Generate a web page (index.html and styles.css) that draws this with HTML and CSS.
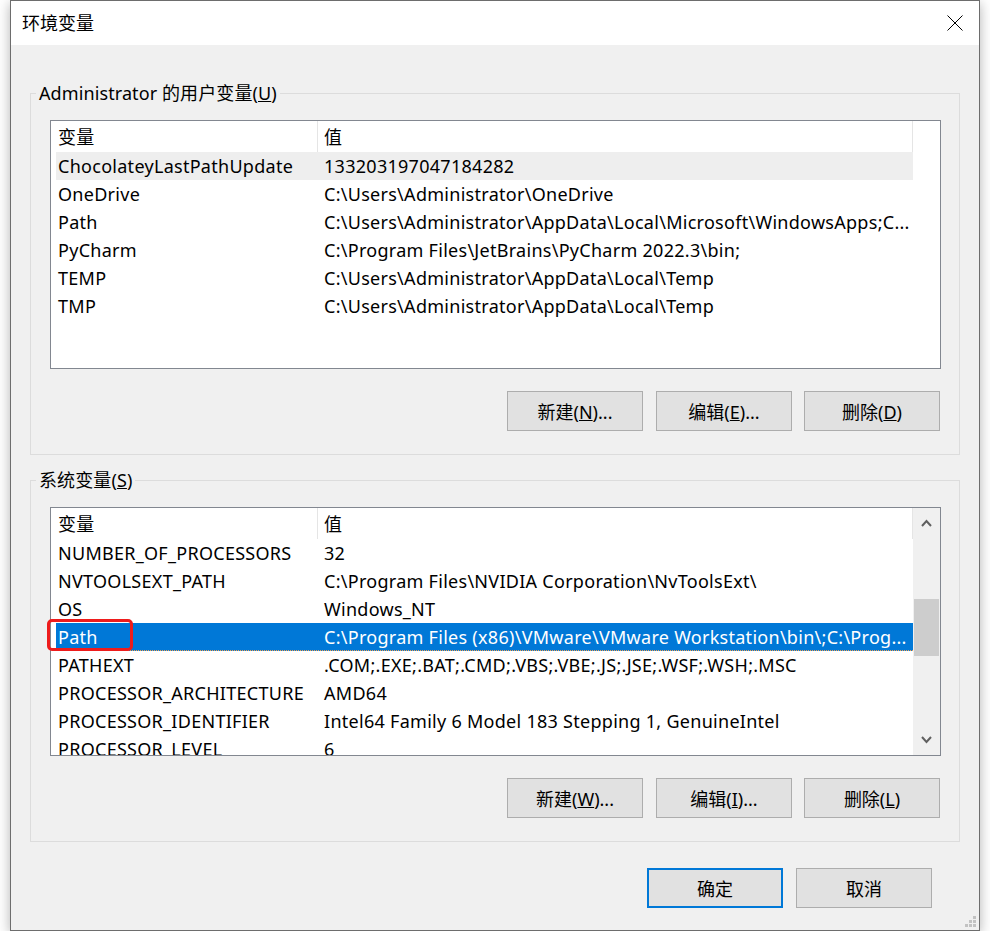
FILE: index.html
```html
<!DOCTYPE html>
<html lang="zh-CN">
<head>
  <meta charset="UTF-8">
  <title>环境变量</title>
  <link rel="stylesheet" href="styles.css">
</head>
<body>
  <div class="window">
    <div class="titlebar">
      <span class="title">环境变量</span>
      <svg class="close" width="16" height="16" viewBox="0 0 16 16">
        <path d="M0.5 0.5 L15.5 15.5 M15.5 0.5 L0.5 15.5" stroke="#000" stroke-width="1" fill="none"/>
      </svg>
    </div>

    <div class="client">
      <!-- 用户变量 -->
      <fieldset class="group first">
        <legend>Administrator 的用户变量(<u>U</u>)</legend>
        <div class="listview">
          <div class="lv-main">
            <div class="lv-head">
              <div class="col name">变量</div>
              <div class="col value">值</div>
            </div>
            <div class="lv-row sel-inactive">
              <div class="col name">ChocolateyLastPathUpdate</div>
              <div class="col value">133203197047184282</div>
            </div>
            <div class="lv-row">
              <div class="col name">OneDrive</div>
              <div class="col value">C:\Users\Administrator\OneDrive</div>
            </div>
            <div class="lv-row">
              <div class="col name">Path</div>
              <div class="col value">C:\Users\Administrator\AppData\Local\Microsoft\WindowsApps;C...</div>
            </div>
            <div class="lv-row">
              <div class="col name">PyCharm</div>
              <div class="col value">C:\Program Files\JetBrains\PyCharm 2022.3\bin;</div>
            </div>
            <div class="lv-row">
              <div class="col name">TEMP</div>
              <div class="col value">C:\Users\Administrator\AppData\Local\Temp</div>
            </div>
            <div class="lv-row">
              <div class="col name">TMP</div>
              <div class="col value">C:\Users\Administrator\AppData\Local\Temp</div>
            </div>
          </div>
          <div class="lv-gutter"></div>
        </div>
        <div class="btn-row">
          <button class="btn">新建(<u>N</u>)...</button>
          <button class="btn">编辑(<u>E</u>)...</button>
          <button class="btn">删除(<u>D</u>)</button>
        </div>
      </fieldset>

      <!-- 系统变量 -->
      <fieldset class="group second">
        <legend>系统变量(<u>S</u>)</legend>
        <div class="lv-wrap">
          <div class="listview">
            <div class="lv-main">
              <div class="lv-head">
                <div class="col name">变量</div>
                <div class="col value">值</div>
              </div>
              <div class="lv-row">
                <div class="col name">NUMBER_OF_PROCESSORS</div>
                <div class="col value">32</div>
              </div>
              <div class="lv-row">
                <div class="col name">NVTOOLSEXT_PATH</div>
                <div class="col value">C:\Program Files\NVIDIA Corporation\NvToolsExt\</div>
              </div>
              <div class="lv-row">
                <div class="col name">OS</div>
                <div class="col value">Windows_NT</div>
              </div>
              <div class="lv-row selected">
                <div class="col name">Path</div>
                <div class="col value">C:\Program Files (x86)\VMware\VMware Workstation\bin\;C:\Prog...</div>
              </div>
              <div class="lv-row">
                <div class="col name">PATHEXT</div>
                <div class="col value">.COM;.EXE;.BAT;.CMD;.VBS;.VBE;.JS;.JSE;.WSF;.WSH;.MSC</div>
              </div>
              <div class="lv-row">
                <div class="col name">PROCESSOR_ARCHITECTURE</div>
                <div class="col value">AMD64</div>
              </div>
              <div class="lv-row">
                <div class="col name">PROCESSOR_IDENTIFIER</div>
                <div class="col value">Intel64 Family 6 Model 183 Stepping 1, GenuineIntel</div>
              </div>
              <div class="lv-row">
                <div class="col name">PROCESSOR_LEVEL</div>
                <div class="col value">6</div>
              </div>
            </div>
            <div class="scrollbar">
              <div class="sb-btn">
                <svg width="11" height="8" viewBox="0 0 11 8"><polyline points="1,7 5.5,2 10,7" fill="none" stroke="#606060" stroke-width="2"/></svg>
              </div>
              <div class="sb-track"><div class="sb-thumb"></div></div>
              <div class="sb-btn">
                <svg width="11" height="8" viewBox="0 0 11 8"><polyline points="1,1 5.5,6 10,1" fill="none" stroke="#606060" stroke-width="2"/></svg>
              </div>
            </div>
          </div>
          <!-- 标注框 -->
          <div class="mark"></div>
        </div>
        <div class="btn-row">
          <button class="btn">新建(<u>W</u>)...</button>
          <button class="btn">编辑(<u>I</u>)...</button>
          <button class="btn">删除(<u>L</u>)</button>
        </div>
      </fieldset>

      <div class="dialog-buttons">
        <button class="btn default">确定</button>
        <button class="btn">取消</button>
      </div>
    </div>

    <div class="grip">
      <span></span><span></span><span></span><span></span><span></span><span></span>
    </div>
  </div>
</body>
</html>
```

FILE: styles.css
```css
* {
  box-sizing: border-box;
}

body {
  margin: 0;
  background: #fff;
  font-family: "Noto Sans", "Noto Sans CJK SC", sans-serif;
  font-size: 18px;
  color: #000;
}

.window {
  position: relative;
  margin-left: 10px;
  width: 970px;
  height: 931px;
  border: 1px solid #6d6d6d;
  background: #f0f0f0;
  box-shadow: 0 3px 12px rgba(0, 0, 0, 0.3);
}

.titlebar {
  height: 44px;
  background: #fff;
  display: flex;
  align-items: center;
  justify-content: space-between;
  padding: 0 16px 0 11px;
}

.title {
  font-size: 18px;
  line-height: 24px;
}

.close {
  display: block;
  margin-top: -1px;
}

.client {
  padding: 0 19px;
}

/* group box */
.group {
  margin: 0;
  padding: 0 18px 23px 19px;
  border: 1px solid #dcdcdc;
  min-width: 0;
}

.group.first {
  margin-top: 36px;
}

.group.second {
  margin-top: 13px;
}

.group legend {
  margin-left: -14px;
  padding: 0 3px;
  font-size: 18px;
  line-height: 24px;
  letter-spacing: 0.1px;
}

/* list view */
.lv-wrap {
  position: relative;
}

.listview {
  margin-top: 15px;
  height: 249px;
  border: 1px solid #828790;
  background: #fff;
  display: flex;
  overflow: hidden;
  letter-spacing: 0.28px;
}

.lv-main {
  flex: 1;
  padding-left: 5px;
  overflow: hidden;
}

.lv-gutter {
  width: 27px;
}

.lv-head,
.lv-row {
  display: flex;
  white-space: nowrap;
}

.lv-head {
  height: 31px;
  line-height: 32px;
}

.lv-row {
  height: 28px;
  line-height: 28px;
}

.col.name {
  width: 261px;
  flex: none;
  padding-left: 2px;
}

.col.value {
  flex: 1;
  min-width: 0;
  padding-left: 7px;
  overflow: hidden;
  text-overflow: ellipsis;
}

.lv-head .col.value {
  padding-left: 6px;
  border-left: 1px solid #e5e5e5;
  border-right: 1px solid #e5e5e5;
  height: 31px;
}

.lv-row.sel-inactive {
  background: #eeeeee;
}

.lv-row.selected {
  background: #0078d7;
  color: #fff;
  border-bottom: 1px dotted #f0a050;
}

.mark {
  position: absolute;
  left: -3px;
  top: 112px;
  width: 86px;
  height: 32px;
  border: 3px solid #ee1c1c;
  border-radius: 5px;
}

/* scrollbar */
.scrollbar {
  width: 27px;
  background: #f0f0f0;
  display: flex;
  flex-direction: column;
}

.sb-btn {
  height: 30px;
  display: flex;
  align-items: center;
  justify-content: center;
}

.sb-btn svg {
  display: block;
}

.sb-track {
  flex: 1;
  padding: 61px 1px 0 1px;
}

.sb-thumb {
  height: 57px;
  background: #cdcdcd;
}

/* buttons */
.btn-row {
  margin-top: 22px;
  padding-right: 1px;
  display: flex;
  justify-content: flex-end;
  gap: 12px;
}

.btn-row .btn:first-child {
  margin-right: 1px;
}

.btn {
  width: 136px;
  height: 40px;
  background: #e1e1e1;
  border: 1px solid #adadad;
  font-family: inherit;
  font-size: 18px;
  color: #000;
  padding: 0;
}

.btn.default {
  border: 2px solid #0078d7;
}

.dialog-buttons {
  margin-top: 26px;
  display: flex;
  justify-content: flex-end;
  gap: 13px;
  padding-right: 28px;
}

/* resize grip */
.grip {
  position: absolute;
  right: 3px;
  bottom: 2px;
  width: 12px;
  height: 12px;
  display: grid;
  grid-template-columns: repeat(3, 3px);
  grid-template-rows: repeat(3, 3px);
  gap: 1px;
  justify-content: end;
}

.grip span {
  background: #c2c2c2;
}

.grip span:nth-child(1) { grid-area: 1 / 3; }
.grip span:nth-child(2) { grid-area: 2 / 2; }
.grip span:nth-child(3) { grid-area: 2 / 3; }
.grip span:nth-child(4) { grid-area: 3 / 1; }
.grip span:nth-child(5) { grid-area: 3 / 2; }
.grip span:nth-child(6) { grid-area: 3 / 3; }
```
